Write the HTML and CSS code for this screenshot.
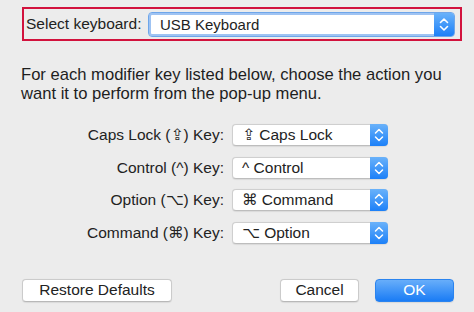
FILE: index.html
```html
<!DOCTYPE html>
<html>
<head>
<meta charset="utf-8">
<link rel="stylesheet" href="styles.css">
</head>
<body>
<div class="dialog">
  <div class="kbd-box">
    <span class="kbd-label">Select keyboard:</span>
    <div class="popup popup-big">
      <span class="popup-text">USB Keyboard</span>
      <span class="stepper stepper-big">
        <svg width="20" height="23" viewBox="0 0 20 23"><path d="M6.5 9.5 L10 6 L13.5 9.5 M6.5 13.5 L10 17 L13.5 13.5" fill="none" stroke="#fff" stroke-width="1.6" stroke-linecap="round" stroke-linejoin="round"/></svg>
      </span>
    </div>
  </div>
  <p class="intro">For each modifier key listed below, choose the action you want it to perform from the pop-up menu.</p>
  <div class="rows">
    <span class="row-label">Caps Lock (<span class="glyph">⇪</span>) Key:</span>
    <div class="popup popup-small"><span class="popup-text"><span class="glyph">⇪</span> Caps Lock</span><span class="stepper"><svg width="18" height="22" viewBox="0 0 18 22"><path d="M5.5 9 L9 5.5 L12.5 9 M5.5 13 L9 16.5 L12.5 13" fill="none" stroke="#fff" stroke-width="1.5" stroke-linecap="round" stroke-linejoin="round"/></svg></span></div>
    <span class="row-label">Control (^) Key:</span>
    <div class="popup popup-small"><span class="popup-text">^ Control</span><span class="stepper"><svg width="18" height="22" viewBox="0 0 18 22"><path d="M5.5 9 L9 5.5 L12.5 9 M5.5 13 L9 16.5 L12.5 13" fill="none" stroke="#fff" stroke-width="1.5" stroke-linecap="round" stroke-linejoin="round"/></svg></span></div>
    <span class="row-label">Option (<span class="glyph">⌥</span>) Key:</span>
    <div class="popup popup-small"><span class="popup-text"><span class="glyph">⌘</span> Command</span><span class="stepper"><svg width="18" height="22" viewBox="0 0 18 22"><path d="M5.5 9 L9 5.5 L12.5 9 M5.5 13 L9 16.5 L12.5 13" fill="none" stroke="#fff" stroke-width="1.5" stroke-linecap="round" stroke-linejoin="round"/></svg></span></div>
    <span class="row-label">Command (<span class="glyph">⌘</span>) Key:</span>
    <div class="popup popup-small"><span class="popup-text"><span class="glyph">⌥</span> Option</span><span class="stepper"><svg width="18" height="22" viewBox="0 0 18 22"><path d="M5.5 9 L9 5.5 L12.5 9 M5.5 13 L9 16.5 L12.5 13" fill="none" stroke="#fff" stroke-width="1.5" stroke-linecap="round" stroke-linejoin="round"/></svg></span></div>
  </div>
  <div class="buttons">
    <button class="btn btn-restore">Restore Defaults</button>
    <div class="btn-group">
      <button class="btn btn-cancel">Cancel</button>
      <button class="btn btn-ok">OK</button>
    </div>
  </div>
</div>
</body>
</html>
```
FILE: styles.css
```css
html, body {
  margin: 0;
  padding: 0;
  background: #ececec;
}
body {
  font-family: "Liberation Sans", Arial, sans-serif;
  font-size: 15.5px;
  color: #222;
  width: 474px;
  height: 312px;
  overflow: hidden;
}
.dialog {
  padding: 7px 20px 0 22px;
  display: flex;
  flex-direction: column;
}
.kbd-box {
  box-sizing: border-box;
  width: 440px;
  height: 34px;
  border: 2px solid #d2123d;
  display: flex;
  align-items: center;
  padding-left: 2px;
}
.kbd-label {
  width: 122px;
}
.popup {
  box-sizing: border-box;
  display: flex;
  align-items: center;
  justify-content: space-between;
  background: #fff;
  border-radius: 4px;
}
.popup-big {
  width: 307px;
  height: 25px;
  border: 1px solid #6ea6ea;
  box-shadow: 0 0 0 2px #9fc3f2 inset;
  padding: 0 0 0 11px;
}
.popup-big .popup-text {
  font-size: 15px;
  color: #1e1e1e;
}
.stepper {
  display: flex;
  align-items: center;
  justify-content: center;
  width: 18px;
  height: 22px;
  border-radius: 0 4px 4px 0;
  background: linear-gradient(#6ab2fa, #1c80f8);
}
.stepper-big {
  width: 20px;
  height: 23px;
  border-radius: 0 3px 3px 0;
}
.intro {
  margin: 24px 0 0 -1px;
  font-size: 16.6px;
  line-height: 19px;
  width: 430px;
  color: #1e1e1e;
}
.rows {
  margin-top: 21px;
  display: grid;
  grid-template-columns: 202px 156px;
  column-gap: 8px;
  grid-auto-rows: 22px;
  row-gap: 10.5px;
  align-items: center;
}
.row-label {
  text-align: right;
  color: #222;
}
.popup-small {
  height: 22px;
  border: 1px solid #cfcfcf;
  border-bottom-color: #bdbdbd;
  padding-left: 9px;
  box-shadow: 0 0.5px 1px rgba(0,0,0,0.08);
}
.popup-small .stepper {
  margin-right: -1px;
  height: 22px;
}
.glyph {
  font-family: "DejaVu Sans", sans-serif;
  font-size: 15.5px;
  line-height: 1;
}
.buttons {
  margin-top: 35px;
  display: flex;
  justify-content: space-between;
  align-items: center;
}
.btn-group {
  display: flex;
  gap: 16px;
}
.btn {
  font-family: "Liberation Sans", Arial, sans-serif;
  font-size: 15.5px;
  height: 23px;
  border-radius: 4px;
  padding: 0;
  margin: 0;
  color: #222;
  background: #fff;
  border: 1px solid #cbcbcb;
  border-bottom-color: #b8b8b8;
  box-shadow: 0 0.5px 1px rgba(0,0,0,0.08);
}
.btn-restore {
  width: 150px;
}
.btn-cancel {
  width: 79px;
}
.btn-ok {
  width: 79px;
  color: #fff;
  border: 1px solid #2b84ef;
  background: linear-gradient(#68aefa, #1a7cf5);
}
```
